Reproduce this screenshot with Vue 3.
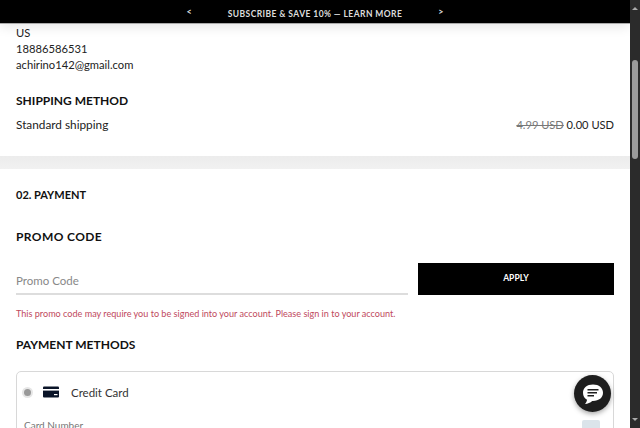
<template>
  <div class="page">
    <div class="content">
      <header class="topbar">
        <span class="arrow">&lt;</span>
        <span class="promo">SUBSCRIBE &amp; SAVE 10% — LEARN MORE</span>
        <span class="arrow">&gt;</span>
      </header>

      <div class="main">
        <section class="summary">
          <div class="address">
            <p v-for="line in addressLines" :key="line">{{ line }}</p>
          </div>
          <h3 class="shipping-title">SHIPPING METHOD</h3>
          <div class="shipping-row">
            <span class="shipping-name">Standard shipping</span>
            <span class="price"><s>4.99 USD</s> 0.00 USD</span>
          </div>
        </section>

        <div class="divider"></div>

        <section class="payment">
          <h2 class="step-title">02. PAYMENT</h2>
          <h3 class="promo-title">PROMO CODE</h3>
          <div class="promo-form">
            <div class="promo-input">Promo Code</div>
            <button class="apply">APPLY</button>
          </div>
          <p class="promo-error">This promo code may require you to be signed into your account. Please sign in to your account.</p>
          <h3 class="methods-title">PAYMENT METHODS</h3>

          <div class="method-card">
            <div class="method-head">
              <span class="radio"></span>
              <svg class="card-icon" width="16" height="12" viewBox="0 0 16 12">
                <rect width="16" height="11" y="0.5" rx="1" fill="#0a1428" />
                <rect y="3" width="16" height="1.6" fill="#fff" />
                <rect x="11" y="8" width="3.5" height="1.2" fill="#fff" />
              </svg>
              <span class="method-name">Credit Card</span>
            </div>
            <div class="card-field">
              <span>Card Number</span>
              <span class="card-badge"></span>
            </div>
          </div>
        </section>
      </div>
    </div>

    <div class="scrollbar">
      <span class="scroll-up"></span>
      <div class="thumb"></div>
      <span class="scroll-down"></span>
    </div>

    <button class="chat">
      <svg width="26" height="26" viewBox="0 0 26 26">
        <path d="M13 3.5c6 0 10 3.4 10 8.2s-4 8.2-10 8.2h-.8c-1.8 1.7-4.400 2.900-7.200 3.100 1.100-1.300 1.800-2.700 2-4.300C4.500 17.300 3 14.800 3 11.700 3 6.900 7 3.500 13 3.500z" fill="#fff" />
        <rect x="7.500" y="8" width="11" height="1.500" fill="#1e1e1e" />
        <rect x="7.500" y="11" width="9.500" height="1.500" fill="#1e1e1e" />
        <rect x="7.500" y="14" width="6.500" height="1.500" fill="#1e1e1e" />
      </svg>
    </button>
  </div>
</template>

<script setup>
const addressLines = ['US', '18886586531', 'achirino142@gmail.com']
</script>

<style>
html,
body {
  margin: 0;
  overflow: hidden;
}
</style>

<style scoped>
.page {
  position: relative;
  display: flex;
  width: 640px;
  height: 428px;
  overflow: hidden;
  background: #fff;
  font-family: Lato, "Noto Sans", sans-serif;
  color: #222;
}

.content {
  flex: 1;
  min-width: 0;
}

.topbar {
  display: flex;
  justify-content: center;
  align-items: center;
  gap: 36px;
  height: 24px;
  background: #000;
  border-bottom: 1px solid #aaa;
  box-sizing: border-box;
  color: #ddd;
  box-shadow: 0 3px 12px rgba(0, 0, 0, 0.1);
  position: relative;
}

.promo {
  font-size: 8.500px;
  font-weight: 700;
  letter-spacing: 0.42px;
  margin-top: 4px;
}

.arrow {
  font-size: 9px;
  font-weight: 700;
  margin-top: -1px;
}

.summary {
  padding: 1px 16px 0;
  height: 132px;
  box-sizing: border-box;
}

.address p {
  margin: 0;
  font-size: 11.200px;
  line-height: 16px;
}

h2,
h3 {
  margin: 0;
  color: #111;
  font-weight: 700;
}

.shipping-title {
  font-size: 12px;
  line-height: 16px;
  margin-top: 20px;
}

.shipping-row {
  display: flex;
  justify-content: space-between;
  font-size: 11.100px;
  line-height: 16px;
  margin-top: 8px;
}

.shipping-name {
  font-size: 11.800px;
}

.price s {
  color: #777;
}

.divider {
  height: 13px;
  background: linear-gradient(#ececec, #f1f1f1);
}

.payment {
  padding: 0 16px;
}

.step-title {
  font-size: 11px;
  line-height: 14px;
  margin-top: 19px;
}

.promo-title {
  font-size: 12px;
  letter-spacing: 0.4px;
  line-height: 16px;
  margin-top: 27px;
}

.promo-form {
  display: flex;
  gap: 10px;
  margin-top: 18px;
}

.promo-input {
  flex: 0 0 392px;
  height: 32px;
  box-sizing: border-box;
  border-bottom: 2px solid #ddd;
  font-size: 11.500px;
  line-height: 36px;
  color: #888;
}

.apply {
  flex: 1;
  height: 32px;
  padding-bottom: 3px;
  border: none;
  background: #000;
  color: #fff;
  font-family: inherit;
  font-size: 8.500px;
  font-weight: 700;
}

.promo-error {
  margin: 13px 0 0;
  font-size: 9.080px;
  line-height: 12px;
  color: #c0495d;
}

.methods-title {
  font-size: 12px;
  line-height: 16px;
  margin-top: 17px;
}

.method-card {
  margin-top: 18px;
  height: 80px;
  border: 1px solid #d8d8d8;
  border-radius: 5px;
  padding: 0 7px;
}

.method-head {
  display: flex;
  align-items: center;
  height: 40px;
}

.radio {
  width: 7px;
  height: 7px;
  border-radius: 50%;
  background: #999;
  box-shadow: 0 0 0 2px #e6e6e6;
}

.card-icon {
  margin-left: 12px;
}

.method-name {
  margin-left: 12px;
  font-size: 11.500px;
  color: #333;
}

.card-field {
  display: flex;
  justify-content: space-between;
  align-items: center;
  margin-top: 7px;
  font-size: 10px;
  color: #777;
}

.card-badge {
  width: 18px;
  height: 10px;
  margin-right: 6px;
  border-radius: 2px;
  background: #dbe4ea;
}

.scrollbar {
  position: relative;
  width: 10px;
  background: #2b2b2b;
}

.thumb {
  position: absolute;
  left: 2px;
  top: 60px;
  width: 6px;
  height: 99px;
  border-radius: 3px;
  background: #9b9b9b;
}

.scroll-up,
.scroll-down {
  position: absolute;
  left: 2px;
  width: 0;
  height: 0;
  border-left: 3px solid transparent;
  border-right: 3px solid transparent;
}

.scroll-up {
  top: 7px;
  border-bottom: 3px solid #aaa;
}

.scroll-down {
  bottom: 7px;
  border-top: 3px solid #aaa;
}

.chat {
  position: absolute;
  left: 574px;
  top: 375px;
  display: flex;
  align-items: center;
  justify-content: center;
  width: 37px;
  height: 37px;
  padding: 0;
  border: none;
  border-radius: 50%;
  background: #1e1e1e;
  box-shadow: 0 2px 5px rgba(0, 0, 0, 0.35);
}
</style>
